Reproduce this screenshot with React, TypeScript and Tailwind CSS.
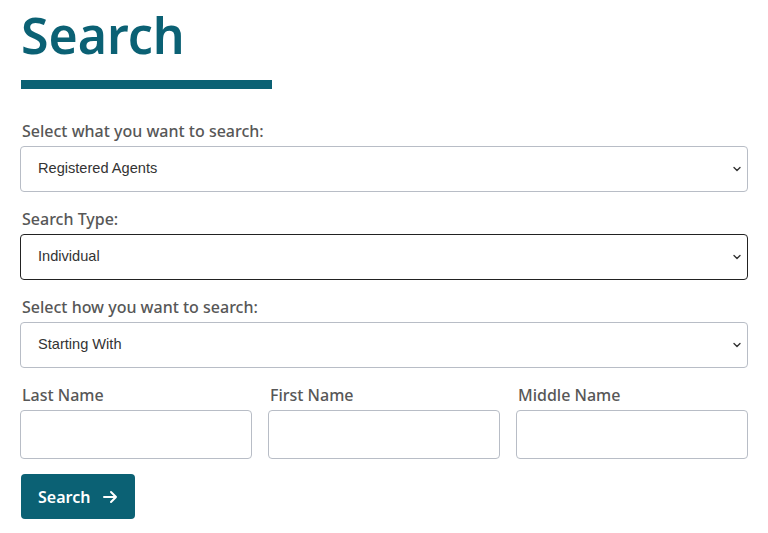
import React from 'react';

const FONT = '[font-family:"Noto_Sans",Arial,sans-serif]';

function Chevron() {
  return (
    <svg className="pointer-events-none absolute right-[6px] top-1/2 -translate-y-1/2" width="10" height="10" viewBox="0 0 10 10">
      <path d="M2 3.5 L5 6.5 L8 3.5" fill="none" stroke="#333" strokeWidth="1.4" strokeLinecap="round" strokeLinejoin="round" />
    </svg>
  );
}

function SelectField({ label, value, focused = false }: { label: string; value: string; focused?: boolean }) {
  return (
    <div className="flex flex-col">
      <label className={`${FONT} text-[16px] leading-[20px] font-medium text-[#575757] mb-[5px] ml-[2px]`}>{label}</label>
      <div className="relative">
        <select
          defaultValue={value}
          className={`w-full h-[46px] appearance-none rounded-[4px] bg-white pl-[17px] pr-8 [font-family:"Liberation_Sans",Arial,sans-serif] text-[14.6px] text-[#333] outline-none ${
            focused ? 'border-[1.5px] border-[#222]' : 'border border-[#b8bdc6]'
          }`}
        >
          <option>{value}</option>
        </select>
        <Chevron />
      </div>
    </div>
  );
}

function TextField({ label }: { label: string }) {
  return (
    <div className="flex flex-col">
      <label className={`${FONT} text-[16px] leading-[20px] font-medium text-[#575757] mb-[5px] ml-[2px]`}>{label}</label>
      <input className="h-[49px] w-full rounded-[4px] border border-[#b8bdc6] bg-white outline-none" />
    </div>
  );
}

export default function App() {
  return (
    <div className="w-[768px] h-[533px] bg-white pl-[20px] pr-[20px] pt-[4px]">
      <h1 className={`${FONT} text-[50px] leading-[62px] font-semibold text-[#0b6174] ml-[1px]`}>Search</h1>
      <div className="mt-[14px] ml-[1px] h-[9px] w-[251px] bg-[#0b6174]" />

      <div className="mt-[32px] flex flex-col gap-[17px]">
        <SelectField label="Select what you want to search:" value="Registered Agents" />
        <SelectField label="Search Type:" value="Individual" focused />
        <SelectField label="Select how you want to search:" value="Starting With" />
      </div>

      <div className="mt-[17px] grid grid-cols-3 gap-[16px]">
        <TextField label="Last Name" />
        <TextField label="First Name" />
        <TextField label="Middle Name" />
      </div>

      <button className={`${FONT} mt-[15px] ml-[1px] flex h-[45px] items-center gap-[12px] rounded-[4px] bg-[#0b6174] px-[17px] text-[16px] font-semibold text-white`}>
        Search
        <svg width="16" height="16" viewBox="0 0 16 16" fill="none" stroke="white" strokeWidth="2" strokeLinecap="round" strokeLinejoin="round">
          <path d="M2 8 H14 M9 3 L14 8 L9 13" />
        </svg>
      </button>
    </div>
  );
}
